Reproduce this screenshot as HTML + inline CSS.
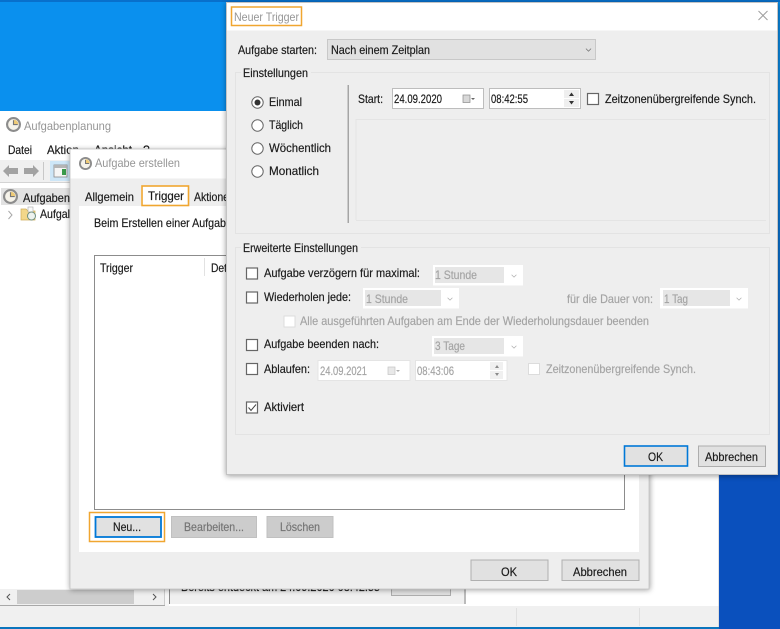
<!DOCTYPE html>
<html lang="de"><head><meta charset="utf-8"><title>Neuer Trigger</title>
<style>
html,body{margin:0;padding:0;width:780px;height:629px;overflow:hidden;background:#0a50bd}
svg{display:block;filter:blur(.3px)}
text{font-family:"Liberation Sans",sans-serif;font-size:12px;fill:#1a1a1a;stroke:#1a1a1a;stroke-width:.18px}
.g{fill:#a4a4a4;stroke:#a4a4a4}.m{fill:#747474;stroke:#747474}.t{fill:#969696;stroke:none}
</style></head><body>
<svg xmlns="http://www.w3.org/2000/svg" width="780" height="629" viewBox="0 0 780 629">
<defs>
<linearGradient id="bg" x1="0" y1="0" x2="0" y2="1"><stop offset="0" stop-color="#0a92ee"/><stop offset=".2" stop-color="#0a8aea"/><stop offset=".8" stop-color="#0a50bd"/><stop offset="1" stop-color="#0a4fbc"/></linearGradient>
<filter id="sh" x="-10%" y="-10%" width="120%" height="120%"><feGaussianBlur stdDeviation="3"/></filter>
<symbol id="clock" viewBox="0 0 16 16"><circle cx="8" cy="8" r="8" fill="#8c8c8c"/><circle cx="8" cy="8" r="5.7" fill="#f6f3ea"/><path d="M8 8V2.8A5.2 5.2 0 0 1 13.200 8Z" fill="#efcb76"/><path d="M8 3.500V8H12.500" fill="none" stroke="#777" stroke-width="1.200"/></symbol>
<symbol id="chev" viewBox="0 0 8 5"><path d="M.8.8 4 4 7.2.8" fill="none" stroke="currentColor"/></symbol>
</defs>

<rect width="780" height="629" fill="url(#bg)"/>
<rect x="0" y="0" width="780" height="111" fill="#0a90ee"/>
<rect x="0" y="0" width="780" height="2" fill="#0870cc"/>
<rect x="719" y="470" width="61" height="159" fill="#0a50bd"/>

<!-- main window -->
<rect x="0" y="111" width="719" height="516" fill="#fff"/>
<rect x="0" y="627" width="719" height="2" fill="#0a75bd"/>
<use href="#clock" x="6" y="117" width="15" height="15"/>
<text class="t" x="24" y="130" textLength="87" lengthAdjust="spacingAndGlyphs">Aufgabenplanung</text>
<text x="8" y="154" textLength="24" lengthAdjust="spacingAndGlyphs">Datei</text>
<text x="47" y="154" textLength="32" lengthAdjust="spacingAndGlyphs">Aktion</text>
<text x="94" y="154" textLength="38" lengthAdjust="spacingAndGlyphs">Ansicht</text>
<text x="143" y="154">?</text>
<rect x="0" y="160" width="719" height="22" fill="#f0f0f0"/>
<path d="M3 171 9 165V168H18V174H9V177Z" fill="#a3a3a3"/>
<path d="M39 171 33 165V168H24V174H33V177Z" fill="#a3a3a3"/>
<rect x="43" y="162" width="1" height="18" fill="#c8c8c8"/>
<rect x="50" y="161" width="20" height="20" fill="#cde6f7"/>
<rect x="54" y="165" width="13" height="12" fill="#f5f5f5" stroke="#8a8a8a" stroke-width=".8"/>
<rect x="54" y="165" width="13" height="3" fill="#b5b5b5"/>
<rect x="62" y="169" width="4" height="6" fill="#3a9a4a"/>
<rect x="0" y="182" width="70" height="1" fill="#d4d4d4"/>
<rect x="1" y="188" width="69" height="17" fill="#e2e2e2"/>
<use href="#clock" x="3" y="189" width="15" height="15"/>
<text x="23" y="202" textLength="47" lengthAdjust="spacingAndGlyphs">Aufgaben</text>
<path d="M8.500 211 12 215 8.500 219" fill="none" stroke="#a8a8a8"/>
<path d="M21 209H26L28 211H35V220H21Z" fill="#f2d78a" stroke="#cfae5c" stroke-width=".7"/>
<rect x="28" y="207" width="5" height="5" fill="#fafafa" stroke="#aaa" stroke-width=".6"/>
<circle cx="31.500" cy="216" r="4" fill="#eef2ee" stroke="#6f8f7f"/>
<text x="40" y="218" textLength="30" lengthAdjust="spacingAndGlyphs">Aufgal</text>
<rect x="0" y="589" width="165" height="16" fill="#f0f0f0"/>
<rect x="17" y="590" width="117" height="14" fill="#cdcdcd"/>
<path d="M10 594 7 597 10 600M153 594 156 597 153 600" fill="none" stroke="#555"/>
<rect x="0" y="605" width="165" height="1" fill="#a8a8a8"/>
<rect x="164.500" y="589" width="1" height="17" fill="#a8a8a8"/>
<rect x="165" y="589" width="4" height="17" fill="#f6f6f6"/>
<rect x="169" y="589" width="1" height="15" fill="#888"/>
<rect x="170" y="589" width="291" height="15" fill="#f0f0f0"/>
<text x="181" y="591" textLength="199" lengthAdjust="spacingAndGlyphs">Bereits entdeckt am 24.09.2020 08:42:55</text>
<rect x="391.500" y="585" width="59" height="10.500" fill="#e1e1e1" stroke="#adadad"/>
<rect x="461" y="589" width="3" height="15" fill="#f0f0f0"/>
<rect x="464.500" y="589" width="1" height="15" fill="#777"/>
<rect x="0" y="606" width="719" height="21" fill="#f0f0f0"/>
<rect x="516" y="608" width="1" height="18" fill="#e0e0e0"/>
<rect x="639" y="608" width="1" height="18" fill="#e0e0e0"/>
<rect x="718" y="111" width="1" height="516" fill="#c8c8c8" opacity=".5"/>

<!-- Aufgabe erstellen dialog -->
<rect x="70" y="150" width="580" height="440" fill="#000" opacity=".38" filter="url(#sh)"/>
<rect x="70" y="149" width="579" height="440" fill="#eeeeee"/>
<rect x="70" y="149" width="579" height="440" fill="none" stroke="#c4c4c4" stroke-width=".8"/>
<rect x="70.500" y="149.500" width="578" height="29" fill="#fff"/>
<use href="#clock" x="79" y="157" width="13" height="13"/>
<text class="t" x="95" y="167" textLength="85" lengthAdjust="spacingAndGlyphs">Aufgabe erstellen</text>
<rect x="79" y="206" width="560" height="346" fill="#fff"/>
<text x="85" y="201" textLength="49" lengthAdjust="spacingAndGlyphs">Allgemein</text>
<rect x="141" y="186" width="47" height="20" fill="#fff"/>
<rect x="142" y="186" width="46.500" height="19.500" fill="none" stroke="#f0a630" stroke-width="1.600"/>
<text x="148" y="200" textLength="36" lengthAdjust="spacingAndGlyphs">Trigger</text>
<text x="194" y="201" textLength="35" lengthAdjust="spacingAndGlyphs">Aktione</text>
<text x="94" y="227" textLength="132" lengthAdjust="spacingAndGlyphs">Beim Erstellen einer Aufgab</text>
<rect x="94.500" y="255.500" width="530" height="254" fill="#fff" stroke="#8c8c8c"/>
<text x="100" y="272" textLength="33" lengthAdjust="spacingAndGlyphs">Trigger</text>
<rect x="204" y="258" width="1" height="18" fill="#e2e2e2"/>
<text x="211" y="272" textLength="16" lengthAdjust="spacingAndGlyphs">Det</text>
<rect x="89.500" y="512.500" width="75" height="29" fill="none" stroke="#f0a630" stroke-width="1.500"/>
<rect x="95.500" y="517" width="65.500" height="20" fill="#e1e1e1" stroke="#0078d7" stroke-width="1.800"/>
<text x="113" y="531" textLength="28" lengthAdjust="spacingAndGlyphs">Neu...</text>
<rect x="171.500" y="516.500" width="85" height="21" fill="#cccccc" stroke="#c0c0c0"/>
<text class="m" x="184" y="531" textLength="60" lengthAdjust="spacingAndGlyphs">Bearbeiten...</text>
<rect x="267" y="516.500" width="66" height="21" fill="#cccccc" stroke="#c0c0c0"/>
<text class="m" x="280" y="531" textLength="40" lengthAdjust="spacingAndGlyphs">Löschen</text>
<rect x="471" y="560" width="77" height="20.500" fill="#e1e1e1" stroke="#b0b0b0"/>
<text x="501" y="576" textLength="16" lengthAdjust="spacingAndGlyphs">OK</text>
<rect x="562" y="560" width="77" height="20.500" fill="#e1e1e1" stroke="#b0b0b0"/>
<text x="573" y="576" textLength="54" lengthAdjust="spacingAndGlyphs">Abbrechen</text>

<!-- Neuer Trigger dialog -->
<rect x="226" y="3" width="553" height="473" fill="#000" opacity=".4" filter="url(#sh)"/>
<rect x="226" y="2" width="552" height="473" fill="#eeeeee"/>
<rect x="226.500" y="2.500" width="551" height="28" fill="#fff"/>
<rect x="226.500" y="2.500" width="551" height="472" fill="none" stroke="#b8b8b8" stroke-width=".8"/>
<rect x="231.500" y="7" width="70" height="18.500" fill="none" stroke="#f0a630" stroke-width="1.500"/>
<text class="t" x="234" y="21" textLength="65" lengthAdjust="spacingAndGlyphs">Neuer Trigger</text>
<path d="M758.500 11 767.500 20M767.500 11 758.500 20" stroke="#9e9e9e" fill="none"/>
<text x="238" y="54" textLength="79" lengthAdjust="spacingAndGlyphs">Aufgabe starten:</text>
<rect x="327.500" y="39.500" width="268" height="20" fill="#e1e1e1" stroke="#c8c8c8"/>
<text x="331" y="54" textLength="99" lengthAdjust="spacingAndGlyphs">Nach einem Zeitplan</text>
<use href="#chev" x="585" y="48" width="7" height="4" color="#777"/>

<rect x="235.500" y="72.500" width="534" height="161" fill="none" stroke="#e3e3e3"/>
<rect x="241" y="68" width="70" height="10" fill="#eeeeee"/>
<text x="243" y="77" textLength="65" lengthAdjust="spacingAndGlyphs">Einstellungen</text>
<rect x="347.500" y="85" width="1.500" height="138" fill="#a5a5a5"/>
<circle cx="257.500" cy="102.500" r="5.700" fill="#fff" stroke="#666"/><circle cx="257.500" cy="102.500" r="3" fill="#333"/>
<circle cx="257.500" cy="125.500" r="5.700" fill="#fff" stroke="#666"/>
<circle cx="257.500" cy="148.500" r="5.700" fill="#fff" stroke="#666"/>
<circle cx="257.500" cy="171.500" r="5.700" fill="#fff" stroke="#666"/>
<text x="269" y="106" textLength="33" lengthAdjust="spacingAndGlyphs">Einmal</text>
<text x="269" y="129" textLength="34" lengthAdjust="spacingAndGlyphs">Täglich</text>
<text x="269" y="152" textLength="62" lengthAdjust="spacingAndGlyphs">Wöchentlich</text>
<text x="269" y="175" textLength="50" lengthAdjust="spacingAndGlyphs">Monatlich</text>
<text x="358" y="103" textLength="25" lengthAdjust="spacingAndGlyphs">Start:</text>
<rect x="392.500" y="88.500" width="91" height="20" fill="#fff" stroke="#bdbdbd"/>
<text x="394" y="103" textLength="48" lengthAdjust="spacingAndGlyphs">24.09.2020</text>
<rect x="463" y="95" width="7" height="7.500" fill="#d8d8d8" stroke="#8a8a8a" stroke-width=".7"/>
<path d="M471 98H475L473 100Z" fill="#666"/>
<rect x="489.500" y="88.500" width="91" height="20" fill="#fff" stroke="#bdbdbd"/>
<text x="491" y="103" textLength="37" lengthAdjust="spacingAndGlyphs">08:42:55</text>
<rect x="564" y="90" width="15" height="8" fill="#efefef"/><rect x="564" y="99" width="15" height="8" fill="#efefef"/>
<path d="M569 96 571.500 92.500 574 96ZM569 101H574L571.500 104.500Z" fill="#333"/>
<rect x="587.500" y="93.500" width="11" height="11" fill="#fff" stroke="#666" stroke-width="1.200"/>
<text x="605" y="103" textLength="151" lengthAdjust="spacingAndGlyphs">Zeitzonenübergreifende Synch.</text>
<path d="M356 220V119.500H766M356 220.500H766" fill="none" stroke="#e4e4e4"/>

<rect x="235.500" y="247.500" width="534" height="187" fill="none" stroke="#e3e3e3"/>
<rect x="241" y="243" width="120" height="10" fill="#eeeeee"/>
<text x="243" y="252" textLength="115" lengthAdjust="spacingAndGlyphs">Erweiterte Einstellungen</text>

<rect x="246.500" y="268" width="11" height="11" fill="#fff" stroke="#666" stroke-width="1.200"/>
<text x="264" y="277" textLength="156" lengthAdjust="spacingAndGlyphs">Aufgabe verzögern für maximal:</text>
<rect x="433" y="265" width="90" height="20.500" fill="#fff"/><rect x="435" y="267" width="69" height="16" fill="#e6e6e6"/>
<text class="g" x="435" y="279" textLength="42" lengthAdjust="spacingAndGlyphs">1 Stunde</text>
<use href="#chev" x="511" y="274" width="6" height="4" color="#b0b0b0"/>

<rect x="246.500" y="292" width="11" height="11" fill="#fff" stroke="#666" stroke-width="1.200"/>
<text x="264" y="301" textLength="87" lengthAdjust="spacingAndGlyphs">Wiederholen jede:</text>
<rect x="363" y="288" width="96" height="20.500" fill="#fff"/><rect x="365" y="290" width="76" height="16" fill="#e6e6e6"/>
<text class="g" x="366" y="303" textLength="42" lengthAdjust="spacingAndGlyphs">1 Stunde</text>
<use href="#chev" x="447" y="297" width="6" height="4" color="#b0b0b0"/>
<text class="g" x="567" y="303" textLength="86" lengthAdjust="spacingAndGlyphs">für die Dauer von:</text>
<rect x="660" y="288" width="88" height="20.500" fill="#fff"/><rect x="663" y="290" width="67" height="16" fill="#e6e6e6"/>
<text class="g" x="664" y="303" textLength="24" lengthAdjust="spacingAndGlyphs">1 Tag</text>
<use href="#chev" x="736" y="297" width="6" height="4" color="#b0b0b0"/>

<rect x="284" y="316" width="11" height="11" fill="#fff" stroke="#dcdcdc"/>
<text class="g" x="300" y="325" textLength="349" lengthAdjust="spacingAndGlyphs">Alle ausgeführten Aufgaben am Ende der Wiederholungsdauer beenden</text>

<rect x="246.500" y="339.500" width="11" height="11" fill="#fff" stroke="#666" stroke-width="1.200"/>
<text x="264" y="348" textLength="115" lengthAdjust="spacingAndGlyphs">Aufgabe beenden nach:</text>
<rect x="432" y="336" width="91" height="20.500" fill="#fff"/><rect x="434" y="338" width="70" height="16" fill="#e6e6e6"/>
<text class="g" x="435" y="350" textLength="30" lengthAdjust="spacingAndGlyphs">3 Tage</text>
<use href="#chev" x="511" y="345" width="6" height="4" color="#b0b0b0"/>

<rect x="246.500" y="363.500" width="11" height="11" fill="#fff" stroke="#666" stroke-width="1.200"/>
<text x="264" y="373" textLength="46" lengthAdjust="spacingAndGlyphs">Ablaufen:</text>
<rect x="318" y="360.500" width="92" height="20" fill="#fff" stroke="#e4e4e4"/>
<text class="g" x="320" y="375" textLength="47" lengthAdjust="spacingAndGlyphs">24.09.2021</text>
<rect x="388" y="367" width="7" height="7.500" fill="#e8e8e8" stroke="#c4c4c4" stroke-width=".7"/>
<path d="M396 370H400L398 372Z" fill="#b0b0b0"/>
<rect x="415.500" y="360.500" width="91.500" height="20" fill="#fff" stroke="#e4e4e4"/>
<text class="g" x="417" y="375" textLength="37" lengthAdjust="spacingAndGlyphs">08:43:06</text>
<rect x="490" y="362" width="13" height="8" fill="#f0f0f0"/><rect x="490" y="371" width="13" height="8" fill="#f0f0f0"/>
<path d="M495 368 497 365 499 368ZM495 373H499L497 376Z" fill="#8a8a8a"/>
<rect x="528.500" y="363.500" width="11" height="11" fill="#fff" stroke="#dcdcdc"/>
<text class="g" x="546" y="373" textLength="150" lengthAdjust="spacingAndGlyphs">Zeitzonenübergreifende Synch.</text>

<rect x="246.500" y="402" width="11" height="11" fill="#fff" stroke="#666" stroke-width="1.200"/>
<path d="M248.500 407.500 251 410.500 256 404.500" fill="none" stroke="#444"/>
<text x="264" y="411" textLength="40" lengthAdjust="spacingAndGlyphs">Aktiviert</text>

<rect x="624.500" y="446" width="63" height="20" fill="#e1e1e1" stroke="#0078d7" stroke-width="1.600"/>
<text x="648" y="461" textLength="15" lengthAdjust="spacingAndGlyphs">OK</text>
<rect x="698.500" y="446" width="67" height="20.500" fill="#e1e1e1" stroke="#adadad"/>
<text x="705" y="461" textLength="53" lengthAdjust="spacingAndGlyphs">Abbrechen</text>
</svg>
</body></html>
